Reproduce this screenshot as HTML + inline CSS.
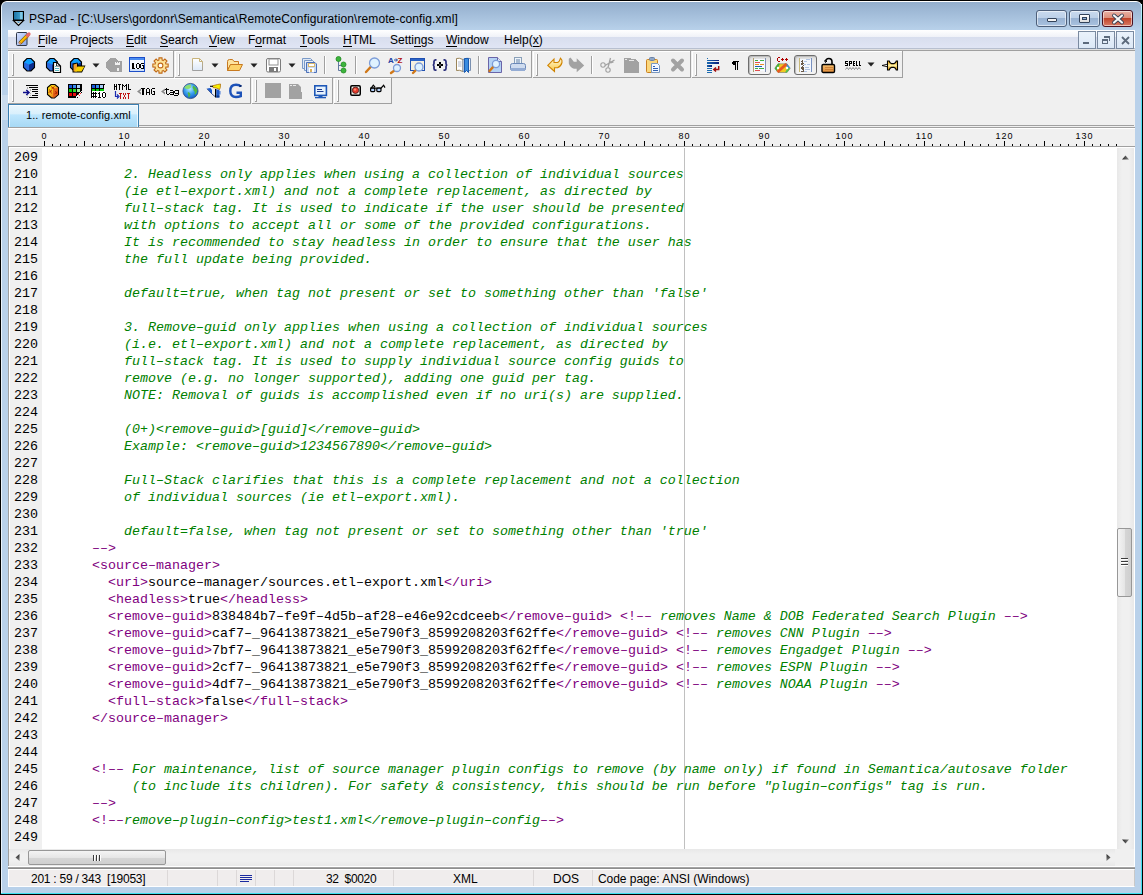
<!DOCTYPE html>
<html><head><meta charset="utf-8">
<style>
*{margin:0;padding:0;box-sizing:border-box}
html,body{width:1143px;height:895px;overflow:hidden;background:#000}
body{position:relative;font-family:"Liberation Sans",sans-serif;font-size:12px;color:#000}
.a{position:absolute}
svg.a{overflow:visible}
.cap{position:absolute;top:10px;height:17px;border:1px solid #4d5f7a;border-radius:3px;background:linear-gradient(#c9daee 0,#bcd0e8 46%,#98b2d2 50%,#a9c2e0 100%);box-shadow:inset 0 0 0 1px rgba(255,255,255,.55)}
.mi{position:absolute;top:33px;white-space:nowrap;line-height:14px}
.mi u{text-decoration:none;position:relative}
.mi u:after{content:"";position:absolute;left:0;right:0;top:13px;height:1px;background:#000}
.mdi{position:absolute;top:31px;width:18px;height:18px;border:1px solid #7a8aa0;background:linear-gradient(#eaf2fb,#dce8f6)}
.tk{position:absolute;width:1px;background:#000}
.rl{position:absolute;top:131px;width:40px;text-align:center;font-family:"Liberation Sans",sans-serif;font-size:9px;line-height:10px;color:#000;letter-spacing:1px;text-indent:1px}
.ln,.num{position:absolute;left:0;height:17px;white-space:pre;font-family:"Liberation Mono",monospace;font-size:13.333px;line-height:17px}
.num{left:4px}
.c{color:#008000;font-style:italic}
.t{color:#800080}
.x{color:#000}
.st{position:absolute;top:873px;white-space:nowrap;line-height:13px;font-size:12px}
.ssep{position:absolute;top:870px;width:1px;height:16px;background:#dcd8d8}
</style></head><body>
<!-- window frame -->
<div class="a" style="left:0;top:0;width:1143px;height:895px;background:#000"></div>
<div class="a" style="left:1px;top:1px;width:1141px;height:893px;background:#b9d1ea;border-radius:6px 6px 0 0;border-top:1px solid #fff;border-left:1px solid #eaf3fb"></div>
<div class="a" style="left:2px;top:2px;width:1139px;height:28px;background:linear-gradient(#93aecd,#b8d1ea);border-radius:5px 5px 0 0"></div>
<div class="a" style="left:1141px;top:4px;width:1px;height:890px;background:linear-gradient(#c8f2fb,#60e4f4 40px,#3ee0f0 200px)"></div>
<div class="a" style="left:1px;top:893px;width:1141px;height:1px;background:#3ee0f0"></div>
<div class="a" style="left:2px;top:95px;width:6px;height:25px;background:#cbdcee"></div>

<!-- title -->
<svg class="a" style="left:12px;top:10px" width="13" height="17" viewBox="0 0 13 17"><defs><linearGradient id="ti" x1="0" y1="0" x2="1" y2="0"><stop offset="0" stop-color="#1a6ea0"/><stop offset=".6" stop-color="#3a9ac8"/><stop offset=".75" stop-color="#9ad8ee"/><stop offset="1" stop-color="#2a86b8"/></linearGradient></defs><rect x="1.5" y="1.5" width="10" height="8.5" fill="url(#ti)" stroke="#000"/><path d="M1.5 10.5H11.5L6.5 15.5Z" fill="#f4f0ea" stroke="#000" stroke-width="1.2"/><path d="M4 11.5H9L6.5 13Z" fill="#2a86c0"/></svg>
<div class="a" id="ttext" style="left:29px;top:12px;letter-spacing:0.1px;white-space:nowrap;line-height:14px">PSPad - [C:\Users\gordonr\Semantica\RemoteConfiguration\remote-config.xml]</div>
<div class="cap" style="left:1036px;width:31px"><div class="a" style="left:10px;top:7px;width:10px;height:4px;border:1px solid #33435a;border-radius:1px;background:#f4f4f4"></div></div>
<div class="cap" style="left:1069px;width:31px"><div class="a" style="left:9px;top:3px;width:11px;height:9px;border:1px solid #33435a;border-radius:1px;background:linear-gradient(#fff,#ddd)"><div class="a" style="left:2px;top:2px;width:5px;height:3px;border:1px solid #33435a;background:#8fb0d8"></div></div></div>
<div class="cap" style="left:1102px;width:31px;border-color:#4a1020;background:linear-gradient(#eab1a4 0,#dc8f7c 46%,#c0442a 50%,#d97c66 100%)"><svg class="a" style="left:9px;top:3px" width="12" height="10" viewBox="0 0 12 10"><path d="M2 1.5L10 8.5M10 1.5L2 8.5" stroke="#333e52" stroke-width="3.8" stroke-linecap="round"/><path d="M2 1.5L10 8.5M10 1.5L2 8.5" stroke="#f6f6f6" stroke-width="2.2" stroke-linecap="round"/></svg></div>

<!-- menu -->
<div class="a" style="left:8px;top:30px;width:1127px;height:18px;background:linear-gradient(#ffffff 0,#f0f2f8 38%,#d8deee 40%,#e0e5f4 100%);border-right:1px solid #fff"></div>
<div class="a" style="left:8px;top:48px;width:1127px;height:1px;background:#b8c0d0"></div>
<div class="a" style="left:8px;top:49px;width:1127px;height:1px;background:#e0e0e0"></div>
<div class="a" style="left:8px;top:50px;width:1127px;height:1px;background:#a0a0a0"></div>
<svg class="a" style="left:15px;top:31px" width="17" height="17" viewBox="0 0 17 17"><defs><linearGradient id="mn" x1="0" y1="0" x2="1" y2="1"><stop offset="0" stop-color="#d8e4ff"/><stop offset="1" stop-color="#8aa4e8"/></linearGradient></defs><rect x="1.5" y="1.5" width="10.5" height="13" rx="1" fill="url(#mn)" stroke="#303848"/><path d="M5.5 11.5L12.5 4.5" stroke="#5a4010" stroke-width="3.8" stroke-linecap="round"/><path d="M5.5 11.5L12.5 4.5" stroke="#f8c000" stroke-width="2.6"/><path d="M6.5 11.5L12.5 5.5" stroke="#f09000" stroke-width="1"/><path d="M12.5 4.5L14 3" stroke="#e86a6a" stroke-width="3.2" stroke-linecap="round"/><path d="M4.3 12.8L5.5 11.5" stroke="#f0a070" stroke-width="2"/></svg>
<div class="mi" style="left:38px"><u>F</u>ile</div>
<div class="mi" style="left:70px">Pro<u>j</u>ects</div>
<div class="mi" style="left:126px"><u>E</u>dit</div>
<div class="mi" style="left:160px"><u>S</u>earch</div>
<div class="mi" style="left:209px"><u>V</u>iew</div>
<div class="mi" style="left:248px">F<u>o</u>rmat</div>
<div class="mi" style="left:300px"><u>T</u>ools</div>
<div class="mi" style="left:343px"><u>H</u>TML</div>
<div class="mi" style="left:390px">Setti<u>n</u>gs</div>
<div class="mi" style="left:446px"><u>W</u>indow</div>
<div class="mi" style="left:504px">Help(<u>x</u>)</div>
<div class="mdi" style="left:1078px"><div class="a" style="left:4px;top:10px;width:6px;height:2px;background:#5c6a7c"></div></div>
<div class="mdi" style="left:1097px"><div class="a" style="left:6px;top:4px;width:6px;height:5px;border:1px solid #5c6a7c;border-top-width:2px;border-left:none;border-bottom:none"></div><div class="a" style="left:4px;top:7px;width:6px;height:5px;border:1px solid #5c6a7c;border-top-width:2px"></div></div>
<div class="mdi" style="left:1116px"><svg class="a" style="left:4px;top:4px" width="9" height="9" viewBox="0 0 9 9"><path d="M1 1L8 8M8 1L1 8" stroke="#5c6a7c" stroke-width="1.8"/></svg></div>

<!-- toolbars -->
<div class="a" style="left:8px;top:51px;width:1127px;height:53px;background:#f0f0f0"></div>
<div class="a" style="left:8px;top:51px;width:165px;height:1px;background:#fff"></div>
<div class="a" style="left:8px;top:51px;width:1px;height:26px;background:#fff"></div>
<div class="a" style="left:173px;top:51px;width:1px;height:27px;background:#a0a0a0"></div>
<div class="a" style="left:8px;top:77px;width:166px;height:1px;background:#a0a0a0"></div>
<div class="a" style="left:175px;top:51px;width:356px;height:1px;background:#fff"></div>
<div class="a" style="left:175px;top:51px;width:1px;height:26px;background:#fff"></div>
<div class="a" style="left:531px;top:51px;width:1px;height:27px;background:#a0a0a0"></div>
<div class="a" style="left:175px;top:77px;width:357px;height:1px;background:#a0a0a0"></div>
<div class="a" style="left:533px;top:51px;width:157px;height:1px;background:#fff"></div>
<div class="a" style="left:533px;top:51px;width:1px;height:26px;background:#fff"></div>
<div class="a" style="left:690px;top:51px;width:1px;height:27px;background:#a0a0a0"></div>
<div class="a" style="left:533px;top:77px;width:158px;height:1px;background:#a0a0a0"></div>
<div class="a" style="left:692px;top:51px;width:210px;height:1px;background:#fff"></div>
<div class="a" style="left:692px;top:51px;width:1px;height:26px;background:#fff"></div>
<div class="a" style="left:902px;top:51px;width:1px;height:27px;background:#a0a0a0"></div>
<div class="a" style="left:692px;top:77px;width:211px;height:1px;background:#a0a0a0"></div>
<div class="a" style="left:8px;top:78px;width:242px;height:1px;background:#fff"></div>
<div class="a" style="left:8px;top:78px;width:1px;height:25px;background:#fff"></div>
<div class="a" style="left:250px;top:78px;width:1px;height:26px;background:#a0a0a0"></div>
<div class="a" style="left:8px;top:103px;width:243px;height:1px;background:#a0a0a0"></div>
<div class="a" style="left:252px;top:78px;width:80px;height:1px;background:#fff"></div>
<div class="a" style="left:252px;top:78px;width:1px;height:25px;background:#fff"></div>
<div class="a" style="left:332px;top:78px;width:1px;height:26px;background:#a0a0a0"></div>
<div class="a" style="left:252px;top:103px;width:81px;height:1px;background:#a0a0a0"></div>
<div class="a" style="left:334px;top:78px;width:57px;height:1px;background:#fff"></div>
<div class="a" style="left:334px;top:78px;width:1px;height:25px;background:#fff"></div>
<div class="a" style="left:391px;top:78px;width:1px;height:26px;background:#a0a0a0"></div>
<div class="a" style="left:334px;top:103px;width:58px;height:1px;background:#a0a0a0"></div>
<div class="a" style="left:13px;top:54px;width:1px;height:22px;background:#a0a0a0"></div>
<div class="a" style="left:12px;top:54px;width:1px;height:21px;background:#fff"></div>
<div class="a" style="left:12px;top:75px;width:1px;height:1px;background:#a0a0a0"></div>
<div class="a" style="left:179px;top:54px;width:1px;height:22px;background:#a0a0a0"></div>
<div class="a" style="left:178px;top:54px;width:1px;height:21px;background:#fff"></div>
<div class="a" style="left:178px;top:75px;width:1px;height:1px;background:#a0a0a0"></div>
<div class="a" style="left:537px;top:54px;width:1px;height:22px;background:#a0a0a0"></div>
<div class="a" style="left:536px;top:54px;width:1px;height:21px;background:#fff"></div>
<div class="a" style="left:536px;top:75px;width:1px;height:1px;background:#a0a0a0"></div>
<div class="a" style="left:696px;top:54px;width:1px;height:22px;background:#a0a0a0"></div>
<div class="a" style="left:695px;top:54px;width:1px;height:21px;background:#fff"></div>
<div class="a" style="left:695px;top:75px;width:1px;height:1px;background:#a0a0a0"></div>
<div class="a" style="left:13px;top:80px;width:1px;height:22px;background:#a0a0a0"></div>
<div class="a" style="left:12px;top:80px;width:1px;height:21px;background:#fff"></div>
<div class="a" style="left:12px;top:101px;width:1px;height:1px;background:#a0a0a0"></div>
<div class="a" style="left:256px;top:80px;width:1px;height:22px;background:#a0a0a0"></div>
<div class="a" style="left:255px;top:80px;width:1px;height:21px;background:#fff"></div>
<div class="a" style="left:255px;top:101px;width:1px;height:1px;background:#a0a0a0"></div>
<div class="a" style="left:338px;top:80px;width:1px;height:22px;background:#a0a0a0"></div>
<div class="a" style="left:337px;top:80px;width:1px;height:21px;background:#fff"></div>
<div class="a" style="left:337px;top:101px;width:1px;height:1px;background:#a0a0a0"></div>
<div class="a" style="left:324px;top:56px;width:1px;height:18px;background:#a0a0a0"></div>
<div class="a" style="left:325px;top:56px;width:1px;height:18px;background:#fff"></div>
<div class="a" style="left:355px;top:56px;width:1px;height:18px;background:#a0a0a0"></div>
<div class="a" style="left:356px;top:56px;width:1px;height:18px;background:#fff"></div>
<div class="a" style="left:478px;top:56px;width:1px;height:18px;background:#a0a0a0"></div>
<div class="a" style="left:479px;top:56px;width:1px;height:18px;background:#fff"></div>
<div class="a" style="left:591px;top:56px;width:1px;height:18px;background:#a0a0a0"></div>
<div class="a" style="left:592px;top:56px;width:1px;height:18px;background:#fff"></div>
<svg class="a" style="left:22px;top:57px" width="16" height="16" viewBox="0 0 16 16" ><g transform="translate(1,1)"><path d="M4 0.5H8L11.5 4V9.5L8 13H4L0.5 9.5V4Z" fill="#2a68dc"/><path d="M6 6.5V13H8L11.5 9.5V4Z" fill="#0a2c8c"/><path d="M4 0.5H8L11.5 4L6 6.5L0.5 4Z" fill="#10a0ff"/><path d="M4 0.5H8L11.5 4V9.5L8 13H4L0.5 9.5V4Z" fill="none" stroke="#000" stroke-width="1.1"/></g></svg>
<svg class="a" style="left:45px;top:57px" width="17" height="17" viewBox="0 0 17 17" ><g transform="translate(1,1)"><path d="M4 0.5H8L11.5 4V9.5L8 13H4L0.5 9.5V4Z" fill="#2a68dc"/><path d="M6 6.5V13H8L11.5 9.5V4Z" fill="#0a2c8c"/><path d="M4 0.5H8L11.5 4L6 6.5L0.5 4Z" fill="#10a0ff"/><path d="M4 0.5H8L11.5 4V9.5L8 13H4L0.5 9.5V4Z" fill="none" stroke="#000" stroke-width="1.1"/></g><path d="M8.5 5.5H12L15.5 9V15.5H8.5Z" fill="#fff" stroke="#000" stroke-width="1.2"/><path d="M11.5 5.5V9H15" fill="none" stroke="#000" stroke-width=".8"/><path d="M10 9.5h1.5M10 11.5h4M10 13.5h4" stroke="#5ab8c0"/></svg>
<svg class="a" style="left:69px;top:57px" width="17" height="17" viewBox="0 0 17 17" ><g transform="translate(1,1)"><path d="M4 0.5H8L11.5 4V9.5L8 13H4L0.5 9.5V4Z" fill="#2a68dc"/><path d="M6 6.5V13H8L11.5 9.5V4Z" fill="#0a2c8c"/><path d="M4 0.5H8L11.5 4L6 6.5L0.5 4Z" fill="#10a0ff"/><path d="M4 0.5H8L11.5 4V9.5L8 13H4L0.5 9.5V4Z" fill="none" stroke="#000" stroke-width="1.1"/></g><path d="M3.5 6.5L8.5 5.5L9.5 8.5H16.5L13 15.5H3.5Z" fill="#000"/><path d="M4.5 7.5L8 6.5V14.5H4.5Z" fill="#f0a030"/><path d="M5.5 14.5L8.5 9.5H15.5L12.5 14.5Z" fill="#f8d000"/></svg>
<svg class="a" style="left:92px;top:63px" width="8" height="5" viewBox="0 0 8 5" ><path d="M0.5 0.5H7.5L4 4.5Z" fill="#222"/></svg>
<svg class="a" style="left:106px;top:58px" width="16" height="14" viewBox="0 0 16 14" shape-rendering="crispEdges"><path d="M4 0H9L12 3H16V14H4L0 10V4Z" fill="#a2a2a2"/><rect x="9" y="4" width="5" height="3" fill="#f0f0f0"/><rect x="10" y="4" width="1" height="1" fill="#a2a2a2"/><rect x="12" y="4" width="1" height="1" fill="#a2a2a2"/><rect x="11" y="10" width="2" height="3" fill="#f0f0f0"/><rect x="14" y="2" width="1" height="1" fill="#f0f0f0"/></svg>
<svg class="a" style="left:129px;top:57px" width="16" height="15" viewBox="0 0 16 15" ><rect x="0.5" y="0.5" width="15" height="14" fill="#f2f8ff" stroke="#1d4fc8"/><rect x="1" y="1" width="14" height="2" fill="#4a8cf0"/><rect x="1" y="12" width="14" height="2" fill="#cfe0fa"/><g fill="#000" shape-rendering="crispEdges"><rect x="3" y="6" width="1" height="1"/><rect x="4" y="6" width="1" height="1"/><rect x="3" y="7" width="1" height="1"/><rect x="4" y="7" width="1" height="1"/><rect x="3" y="8" width="1" height="1"/><rect x="4" y="8" width="1" height="1"/><rect x="3" y="9" width="1" height="1"/><rect x="4" y="9" width="1" height="1"/><rect x="3" y="10" width="1" height="1"/><rect x="4" y="10" width="1" height="1"/><rect x="3" y="11" width="1" height="1"/><rect x="4" y="11" width="1" height="1"/><rect x="5" y="11" width="1" height="1"/><rect x="8" y="6" width="1" height="1"/><rect x="9" y="6" width="1" height="1"/><rect x="7" y="7" width="1" height="1"/><rect x="10" y="7" width="1" height="1"/><rect x="7" y="8" width="1" height="1"/><rect x="10" y="8" width="1" height="1"/><rect x="7" y="9" width="1" height="1"/><rect x="10" y="9" width="1" height="1"/><rect x="7" y="10" width="1" height="1"/><rect x="10" y="10" width="1" height="1"/><rect x="8" y="11" width="1" height="1"/><rect x="9" y="11" width="1" height="1"/><rect x="12" y="6" width="1" height="1"/><rect x="13" y="6" width="1" height="1"/><rect x="14" y="6" width="1" height="1"/><rect x="11" y="7" width="1" height="1"/><rect x="11" y="8" width="1" height="1"/><rect x="13" y="8" width="1" height="1"/><rect x="14" y="8" width="1" height="1"/><rect x="11" y="9" width="1" height="1"/><rect x="14" y="9" width="1" height="1"/><rect x="11" y="10" width="1" height="1"/><rect x="14" y="10" width="1" height="1"/><rect x="12" y="11" width="1" height="1"/><rect x="13" y="11" width="1" height="1"/><rect x="14" y="11" width="1" height="1"/></g></svg>
<svg class="a" style="left:152px;top:57px" width="17" height="17" viewBox="0 0 17 17" ><path d="M6.36 3.33 L6.86 3.14 L7.01 0.84 L9.99 0.84 L10.14 3.14 L10.64 3.33 L11.13 3.56 L12.86 2.03 L14.97 4.14 L13.44 5.87 L13.67 6.36 L13.86 6.86 L16.16 7.01 L16.16 9.99 L13.86 10.14 L13.67 10.64 L13.44 11.13 L14.97 12.86 L12.86 14.97 L11.13 13.44 L10.64 13.67 L10.14 13.86 L9.99 16.16 L7.01 16.16 L6.86 13.86 L6.36 13.67 L5.87 13.44 L4.14 14.97 L2.03 12.86 L3.56 11.13 L3.33 10.64 L3.14 10.14 L0.84 9.99 L0.84 7.01 L3.14 6.86 L3.33 6.36 L3.56 5.87 L2.03 4.14 L4.14 2.03 L5.87 3.56Z" fill="#fde39a" stroke="#c06a18" stroke-width="1.1" stroke-linejoin="miter"/><circle cx="8.5" cy="8.5" r="2.4" fill="#fff" stroke="#c06a18" stroke-width="1.1"/></svg>
<svg class="a" style="left:191px;top:57px" width="13" height="15" viewBox="0 0 13 15" ><defs><linearGradient id="nd" x1="0" y1="0" x2="0" y2="1"><stop offset="0" stop-color="#c9b47a"/><stop offset="1" stop-color="#a0a0a0"/></linearGradient><linearGradient id="ndf" x1="0" y1="0" x2="0" y2="1"><stop offset="0" stop-color="#fff"/><stop offset="1" stop-color="#dde9f8"/></linearGradient></defs><path d="M1.5 1.5H8.5L11.5 4.5V13.5H1.5Z" fill="url(#ndf)" stroke="url(#nd)"/><path d="M8.5 1.5V4.5H11.5" fill="none" stroke="#c9b47a"/></svg>
<svg class="a" style="left:211px;top:63px" width="8" height="5" viewBox="0 0 8 5" ><path d="M0.5 0.5H7.5L4 4.5Z" fill="#222"/></svg>
<svg class="a" style="left:227px;top:59px" width="16" height="13" viewBox="0 0 16 13" ><path d="M0.5 2.5Q0.5 0.5 2.5 0.5H5.5L7 2.5H11.5V5.5H3.5L0.5 11.5Z" fill="#fde4a0" stroke="#c87a20"/><path d="M0.5 11.5L3.5 5.5H15.5L12.5 11.5Z" fill="#fcd36a" stroke="#c87a20"/></svg>
<svg class="a" style="left:250px;top:63px" width="8" height="5" viewBox="0 0 8 5" ><path d="M0.5 0.5H7.5L4 4.5Z" fill="#222"/></svg>
<svg class="a" style="left:266px;top:58px" width="15" height="15" viewBox="0 0 15 15" ><rect x="0.5" y="0.5" width="14" height="13.5" rx="1.5" fill="#fff" stroke="#7c7c7c"/><rect x="3" y="1" width="9" height="6" fill="#fff" stroke="#909090"/><rect x="3" y="9" width="9" height="5" fill="#7a7a7a"/><rect x="8" y="10" width="2" height="3" fill="#fff"/></svg>
<svg class="a" style="left:288px;top:63px" width="8" height="5" viewBox="0 0 8 5" ><path d="M0.5 0.5H7.5L4 4.5Z" fill="#222"/></svg>
<svg class="a" style="left:301px;top:57px" width="17" height="17" viewBox="0 0 17 17" ><path d="M1.5 1.5H9.5L11.5 3.5V11.5H1.5Z" fill="#dfe8f5" stroke="#7a9ac8"/><path d="M3.5 3.5H11.5L13.5 5.5V13.5H3.5Z" fill="#e6eef8" stroke="#7a9ac8"/><path d="M5.5 5.5H14L15.5 7V15.5H5.5Z" fill="#c9daf2" stroke="#4d70b8"/><rect x="7.5" y="6.5" width="6" height="3" fill="#fff" stroke="#d8b870"/><rect x="8" y="11" width="5" height="4.5" fill="#fff"/><rect x="9" y="12" width="2" height="3" fill="#d8b060"/></svg>
<svg class="a" style="left:335px;top:56px" width="12" height="18" viewBox="0 0 12 18" ><path d="M3.5 4V14.5M3.5 9.5H8M3.5 14.5H8" stroke="#6078a0"/><circle cx="3.5" cy="3" r="2.5" fill="#3cb43c" stroke="#228a22" stroke-width=".8"/><circle cx="8.5" cy="8.5" r="2.5" fill="#3cb43c" stroke="#228a22" stroke-width=".8"/><circle cx="8.5" cy="14.5" r="2.5" fill="#3cb43c" stroke="#228a22" stroke-width=".8"/></svg>
<svg class="a" style="left:364px;top:57px" width="17" height="17" viewBox="0 0 17 17" ><path d="M2 15L7.5 9.0" stroke="#d07818" stroke-width="2.4" stroke-linecap="round"/><circle cx="10.5" cy="6" r="5" fill="#dff2ff" stroke="#7c9cd8" stroke-width="1.3"/></svg>
<svg class="a" style="left:388px;top:56px" width="16" height="18" viewBox="0 0 16 18" ><text x="0" y="7" font-family="Liberation Sans" font-weight="bold" font-size="8" fill="#2040a0">A</text><path d="M6 4H9M8 2.5L9.5 4L8 5.5" stroke="#2040a0" fill="none"/><text x="9.5" y="7" font-family="Liberation Sans" font-weight="bold" font-size="8" fill="#b01010">Z</text><path d="M3 17L6.9 14.1" stroke="#d07818" stroke-width="2.4" stroke-linecap="round"/><circle cx="9" cy="12" r="3.5" fill="#dff2ff" stroke="#7c9cd8" stroke-width="1.3"/></svg>
<svg class="a" style="left:410px;top:58px" width="16" height="16" viewBox="0 0 16 16" ><rect x="0.5" y="0.5" width="14" height="12" fill="#f6f0e0" stroke="#2050b0"/><rect x="1" y="1" width="13" height="2" fill="#2c64c8"/><path d="M3 15L6.6 11.4" stroke="#d07818" stroke-width="2.4" stroke-linecap="round"/><circle cx="9" cy="9" r="4" fill="#dff2ff" stroke="#7c9cd8" stroke-width="1.3"/></svg>
<svg class="a" style="left:432px;top:59px" width="17" height="13" viewBox="0 0 17 13" ><path d="M4.5 0.8H3.5Q2 0.8 2 2.5V4.5Q2 5.8 0.8 6Q2 6.2 2 7.5V9.5Q2 11.2 3.5 11.2H4.5M11.5 0.8H12.5Q14 0.8 14 2.5V4.5Q14 5.8 15.2 6Q14 6.2 14 7.5V9.5Q14 11.2 12.5 11.2H11.5" stroke="#262a78" stroke-width="1.7" fill="none"/><rect x="7" y="3" width="2" height="6" fill="#000"/><rect x="5" y="5" width="6" height="2" fill="#000"/><rect x="7" y="5" width="2" height="2" fill="#fff" opacity=".3"/></svg>
<svg class="a" style="left:455px;top:57px" width="17" height="17" viewBox="0 0 17 17" ><path d="M1.5 1.5Q4 0.5 8 2.5V14.5Q4 12.5 1.5 13.5Z" fill="#fff" stroke="#9a8458"/><path d="M8 2.5Q12 0.5 15.5 1.5V13.5Q12 12.5 8 14.5Z" fill="#eef2f8" stroke="#7a90b0"/><path d="M3 5h3.5M3 7h3.5M3 9h3.5" stroke="#b0b8c8"/><path d="M9.5 1.5H13.5V15.5L11.5 13.5L9.5 15.5Z" fill="#3a8ce0" stroke="#1a5ab0"/></svg>
<svg class="a" style="left:488px;top:57px" width="15" height="16" viewBox="0 0 15 16" ><path d="M0.5 0.5H9.5L13.5 4.5V15.5H0.5Z" fill="#b4d2f4" stroke="#6a64a8"/><path d="M9.5 0.5V4.5H13.5" fill="#dfeefc" stroke="#6a64a8"/><path d="M1.5 14L5.84 9.16" stroke="#d07818" stroke-width="2.4" stroke-linecap="round"/><circle cx="8" cy="7" r="3.6" fill="#dff2ff" stroke="#7c9cd8" stroke-width="1.3"/></svg>
<svg class="a" style="left:510px;top:57px" width="16" height="16" viewBox="0 0 16 16" ><rect x="4.5" y="0.5" width="7" height="6" fill="#eef4fa" stroke="#8aa0b8"/><path d="M6 3h4M6 5h4" stroke="#6080a8"/><rect x="0.5" y="6.5" width="15" height="7" rx="2" fill="#cfdcef" stroke="#6a88b8"/><rect x="1" y="11" width="14" height="3" fill="#94acd4"/></svg>
<svg class="a" style="left:547px;top:57px" width="16" height="16" viewBox="0 0 16 16" ><defs><linearGradient id="ud" x1="0" y1="0" x2="0" y2="1"><stop offset="0" stop-color="#fffbe8"/><stop offset=".5" stop-color="#fde08a"/><stop offset="1" stop-color="#f8c850"/></linearGradient></defs><path d="M0.8 8.4L7 2.2V5.5H10.5Q12.5 5 13.5 1.2Q15.5 3 15 5.5Q14 9.5 10.5 10.8H7.5V14.5Z" fill="url(#ud)" stroke="#d08400" stroke-width="1.1" stroke-linejoin="miter"/></svg>
<svg class="a" style="left:568px;top:57px" width="17" height="16" viewBox="0 0 17 16" ><path d="M16.2 8.4L8.7 1.3V4.8H5.8L2.5 0.5L0.8 1.8V6.5Q2 10.5 6 11.8H8.7V15.2Z" fill="#a2a2a2"/></svg>
<svg class="a" style="left:600px;top:57px" width="16" height="16" viewBox="0 0 16 16" ><circle cx="3" cy="8" r="2.2" fill="none" stroke="#a2a2a2" stroke-width="1.1"/><circle cx="8" cy="13" r="2.2" fill="none" stroke="#a2a2a2" stroke-width="1.1"/><path d="M5 8.5L14.5 3M8 10.5L10.5 1M10.5 6l3-1M9.5 3.5l1 2" stroke="#a2a2a2" stroke-width="1.3"/></svg>
<svg class="a" style="left:624px;top:57px" width="16" height="16" viewBox="0 0 16 16" shape-rendering="crispEdges"><path d="M0 1H6L7 2H11L15 6V16H0Z" fill="#a2a2a2"/><rect x="1" y="2" width="2" height="1" fill="#e8e8e8"/><rect x="5" y="3" width="5" height="1" fill="#e8e8e8"/></svg>
<svg class="a" style="left:646px;top:57px" width="15" height="16" viewBox="0 0 15 16" ><rect x="0.5" y="2.5" width="11" height="13" rx="1" fill="#fbd77c" stroke="#c88020"/><rect x="3.5" y="0.5" width="5" height="3" rx="1" fill="#8ea6c6" stroke="#6a82a6"/><path d="M5.5 6.5H11.5L13.5 8.5V15.5H5.5Z" fill="#f4f8ff" stroke="#7a98c0"/><path d="M7 9.5h2M7 11.5h5M7 13.5h5" stroke="#3060b0"/></svg>
<svg class="a" style="left:670px;top:58px" width="15" height="14" viewBox="0 0 15 14" ><path d="M3 2.5L12 11.5M12 2.5L3 11.5" stroke="#a2a2a2" stroke-width="4" stroke-linecap="round"/></svg>
<svg class="a" style="left:707px;top:58px" width="14" height="16" viewBox="0 0 14 16" ><defs><linearGradient id="ww" x1="0" y1="0" x2="1" y2="0"><stop offset="0" stop-color="#1a6ab0"/><stop offset="1" stop-color="#0a1a78"/></linearGradient></defs><g shape-rendering="crispEdges"><rect x="0" y="0" width="1" height="1" fill="#1a6ab0"/><rect x="0" y="2" width="12" height="1" fill="url(#ww)"/><rect x="0" y="4" width="12" height="2" fill="url(#ww)"/><rect x="0" y="7" width="5" height="2" fill="url(#ww)"/><rect x="0" y="10" width="5" height="1" fill="#1a6ab0"/><rect x="0" y="12" width="5" height="1" fill="#1a6ab0"/><rect x="0" y="14" width="5" height="1" fill="#1a6ab0"/></g><path d="M11.7 8V11.5H7.5M9 9.5L6.8 11.5L9 13.5" stroke="#a00c0c" stroke-width="1.5" fill="none"/></svg>
<svg class="a" style="left:732px;top:61px" width="8" height="10" viewBox="0 0 8 10" ><g fill="#000" shape-rendering="crispEdges"><rect x="1" y="0" width="1" height="1"/><rect x="2" y="0" width="1" height="1"/><rect x="3" y="0" width="1" height="1"/><rect x="4" y="0" width="1" height="1"/><rect x="5" y="0" width="1" height="1"/><rect x="6" y="0" width="1" height="1"/><rect x="0" y="1" width="1" height="1"/><rect x="1" y="1" width="1" height="1"/><rect x="2" y="1" width="1" height="1"/><rect x="3" y="1" width="1" height="1"/><rect x="5" y="1" width="1" height="1"/><rect x="0" y="2" width="1" height="1"/><rect x="1" y="2" width="1" height="1"/><rect x="2" y="2" width="1" height="1"/><rect x="3" y="2" width="1" height="1"/><rect x="5" y="2" width="1" height="1"/><rect x="1" y="3" width="1" height="1"/><rect x="2" y="3" width="1" height="1"/><rect x="3" y="3" width="1" height="1"/><rect x="5" y="3" width="1" height="1"/><rect x="3" y="4" width="1" height="1"/><rect x="5" y="4" width="1" height="1"/><rect x="3" y="5" width="1" height="1"/><rect x="5" y="5" width="1" height="1"/><rect x="3" y="6" width="1" height="1"/><rect x="5" y="6" width="1" height="1"/><rect x="3" y="7" width="1" height="1"/><rect x="5" y="7" width="1" height="1"/><rect x="3" y="8" width="1" height="1"/><rect x="5" y="8" width="1" height="1"/></g></svg>
<div class="a" style="left:748px;top:55px;width:23px;height:20px;border:1px solid #6e6e6e;border-radius:3px;background:linear-gradient(#dcdcdc,#ececec 40%,#f4f4f4);box-shadow:inset 1px 1px 1px #b8b8b8"></div>
<svg class="a" style="left:753px;top:58px" width="14" height="14" viewBox="0 0 14 14" ><rect x="0" y="0" width="1" height="14" fill="#b0a070"/><rect x="12" y="0" width="1" height="14" fill="#8090b0"/><rect x="1" y="1" width="11" height="12" fill="#f6f9ff"/><path d="M2 2.5h3M7 2.5h4" stroke="#40b040"/><path d="M2 4.5h5" stroke="#e05050"/><path d="M2 6.5h4M7 6.5h4" stroke="#f09020"/><path d="M2 8.5h7" stroke="#2060b0"/><path d="M2 10.5h3M6 10.5h5" stroke="#40b040"/><path d="M2 12.5h5" stroke="#e05050"/></svg>
<svg class="a" style="left:774px;top:57px" width="17" height="17" viewBox="0 0 17 17" ><g fill="#b00000" shape-rendering="crispEdges"><rect x="4" y="0" width="1" height="1"/><rect x="5" y="0" width="1" height="1"/><rect x="3" y="1" width="1" height="1"/><rect x="3" y="2" width="1" height="1"/><rect x="3" y="3" width="1" height="1"/><rect x="4" y="4" width="1" height="1"/><rect x="5" y="4" width="1" height="1"/></g><g fill="#b00000" shape-rendering="crispEdges"><rect x="8" y="1" width="1" height="1"/><rect x="7" y="2" width="1" height="1"/><rect x="8" y="2" width="1" height="1"/><rect x="9" y="2" width="1" height="1"/><rect x="8" y="3" width="1" height="1"/></g><g fill="#b00000" shape-rendering="crispEdges"><rect x="12" y="1" width="1" height="1"/><rect x="11" y="2" width="1" height="1"/><rect x="12" y="2" width="1" height="1"/><rect x="13" y="2" width="1" height="1"/><rect x="12" y="3" width="1" height="1"/></g><path d="M0.8 11.2L4 6.8H13L16.2 11.2L13 15.5H4Z" fill="#f0c820" stroke="#707070" stroke-width=".6"/><path d="M0.8 11.2L4 6.8H6L2.5 14Z" fill="#40b040"/><path d="M11 6.8H13L16.2 11.2H13.5Z" fill="#3090e0"/><path d="M13.5 11.2H16.2L13 15.5H11Z" fill="#50c050"/><path d="M3.5 15L12.5 7" stroke="#e85a20" stroke-width="3"/><circle cx="4" cy="11" r="1.2" fill="#fff"/><circle cx="13" cy="11" r="1.2" fill="#fff"/></svg>
<div class="a" style="left:794px;top:55px;width:23px;height:20px;border:1px solid #6e6e6e;border-radius:3px;background:linear-gradient(#dcdcdc,#ececec 40%,#f4f4f4);box-shadow:inset 1px 1px 1px #b8b8b8"></div>
<svg class="a" style="left:799px;top:58px" width="14" height="14" viewBox="0 0 14 14" ><rect x="0" y="0" width="1" height="14" fill="#c8b878"/><rect x="12" y="0" width="1" height="14" fill="#7890c0"/><rect x="1" y="1" width="11" height="12" fill="#f4f8fe"/><g fill="#6a5a4a" shape-rendering="crispEdges"><rect x="3" y="2" width="1" height="1"/><rect x="2" y="3" width="1" height="1"/><rect x="3" y="3" width="1" height="1"/><rect x="3" y="4" width="1" height="1"/><rect x="2" y="5" width="1" height="1"/><rect x="3" y="5" width="1" height="1"/><rect x="4" y="5" width="1" height="1"/></g><g fill="#6a5a4a" shape-rendering="crispEdges"><rect x="2" y="6" width="1" height="1"/><rect x="3" y="6" width="1" height="1"/><rect x="4" y="7" width="1" height="1"/><rect x="3" y="8" width="1" height="1"/><rect x="2" y="9" width="1" height="1"/><rect x="3" y="9" width="1" height="1"/><rect x="4" y="9" width="1" height="1"/></g><g fill="#6a5a4a" shape-rendering="crispEdges"><rect x="2" y="10" width="1" height="1"/><rect x="3" y="10" width="1" height="1"/><rect x="4" y="10" width="1" height="1"/><rect x="3" y="11" width="1" height="1"/><rect x="4" y="11" width="1" height="1"/><rect x="4" y="12" width="1" height="1"/><rect x="2" y="13" width="1" height="1"/><rect x="3" y="13" width="1" height="1"/><rect x="4" y="13" width="1" height="1"/></g><g shape-rendering="crispEdges" fill="#b0c4e4"><rect x="7" y="1" width="4" height="1"/><rect x="5" y="3" width="3" height="1"/><rect x="5" y="6" width="2" height="1"/><rect x="8" y="6" width="3" height="1"/><rect x="6" y="9" width="4" height="1"/><rect x="6" y="11" width="5" height="1"/><rect x="5" y="13" width="3" height="1"/></g></svg>
<svg class="a" style="left:821px;top:57px" width="15" height="17" viewBox="0 0 15 17" ><defs><linearGradient id="lk" x1="0" y1="0" x2="0" y2="1"><stop offset="0" stop-color="#f4c070"/><stop offset="1" stop-color="#e08a38"/></linearGradient></defs><path d="M11 8V5Q11 1.5 7.8 1.5Q5 1.5 4.5 4.5" fill="none" stroke="#000" stroke-width="1.6"/><path d="M3.5 3.5L4.5 5.5L6 4" fill="none" stroke="#000" stroke-width="1"/><rect x="1" y="7.5" width="12.5" height="8" rx="1.3" fill="url(#lk)" stroke="#000" stroke-width="1.4"/><path d="M4 10.5h8M4 12.5h8" stroke="#c87830" stroke-width=".8"/></svg>
<svg class="a" style="left:845px;top:60px" width="17" height="11" viewBox="0 0 17 11" ><g fill="#000" shape-rendering="crispEdges"><rect x="0" y="1" width="1" height="1"/><rect x="1" y="1" width="1" height="1"/><rect x="2" y="1" width="1" height="1"/><rect x="0" y="2" width="1" height="1"/><rect x="0" y="3" width="1" height="1"/><rect x="1" y="3" width="1" height="1"/><rect x="2" y="3" width="1" height="1"/><rect x="2" y="4" width="1" height="1"/><rect x="0" y="5" width="1" height="1"/><rect x="1" y="5" width="1" height="1"/><rect x="2" y="5" width="1" height="1"/></g><g fill="#000" shape-rendering="crispEdges"><rect x="4" y="1" width="1" height="1"/><rect x="5" y="1" width="1" height="1"/><rect x="6" y="1" width="1" height="1"/><rect x="4" y="2" width="1" height="1"/><rect x="6" y="2" width="1" height="1"/><rect x="4" y="3" width="1" height="1"/><rect x="5" y="3" width="1" height="1"/><rect x="6" y="3" width="1" height="1"/><rect x="4" y="4" width="1" height="1"/><rect x="4" y="5" width="1" height="1"/></g><g fill="#000" shape-rendering="crispEdges"><rect x="8" y="1" width="1" height="1"/><rect x="9" y="1" width="1" height="1"/><rect x="8" y="2" width="1" height="1"/><rect x="8" y="3" width="1" height="1"/><rect x="9" y="3" width="1" height="1"/><rect x="8" y="4" width="1" height="1"/><rect x="8" y="5" width="1" height="1"/><rect x="9" y="5" width="1" height="1"/></g><g fill="#000" shape-rendering="crispEdges"><rect x="11" y="1" width="1" height="1"/><rect x="11" y="2" width="1" height="1"/><rect x="11" y="3" width="1" height="1"/><rect x="11" y="4" width="1" height="1"/><rect x="11" y="5" width="1" height="1"/><rect x="12" y="5" width="1" height="1"/></g><g fill="#000" shape-rendering="crispEdges"><rect x="14" y="1" width="1" height="1"/><rect x="14" y="2" width="1" height="1"/><rect x="14" y="3" width="1" height="1"/><rect x="14" y="4" width="1" height="1"/><rect x="14" y="5" width="1" height="1"/><rect x="15" y="5" width="1" height="1"/></g><path d="M0.5 9.5l1.5-2 1.5 2 1.5-2 1.5 2 1.5-2 1.5 2 1.5-2 1.5 2 1.5-2 1.5 2" stroke="#707070" fill="none" stroke-width=".8"/></svg>
<svg class="a" style="left:867px;top:62px" width="8" height="5" viewBox="0 0 8 5" ><path d="M0.5 0.5H7.5L4 4.5Z" fill="#222"/></svg>
<svg class="a" style="left:881px;top:60px" width="17" height="11" viewBox="0 0 17 11" ><defs><linearGradient id="pn" x1="0" y1="0" x2="0" y2="1"><stop offset="0" stop-color="#f0a000"/><stop offset=".5" stop-color="#fff0a0"/><stop offset="1" stop-color="#e09000"/></linearGradient></defs><path d="M1 5.5L6.5 4.2V6.8Z" fill="#fff" stroke="#000" stroke-width=".9"/><path d="M6.5 1H8.2Q8.8 3.3 10.5 3.6H13Q14.7 3.3 15.3 1H16.5V10H15.3Q14.7 7.7 13 7.4H10.5Q8.8 7.7 8.2 10H6.5Z" fill="url(#pn)" stroke="#000" stroke-width="1.1"/></svg>
<svg class="a" style="left:22px;top:84px" width="17" height="15" viewBox="0 0 17 15" ><g shape-rendering="crispEdges"><rect x="4" y="1" width="12" height="1" fill="#000"/><rect x="7" y="3" width="9" height="1" fill="#000"/><rect x="10" y="5" width="6" height="1" fill="#000"/><rect x="10" y="7" width="6" height="1" fill="#000"/><rect x="13" y="9" width="3" height="1" fill="#000"/><rect x="10" y="11" width="6" height="1" fill="#000"/><rect x="7" y="13" width="9" height="1" fill="#000"/><rect x="5" y="3" width="1" height="2" fill="#a8a8a8"/><rect x="8" y="5" width="1" height="2" fill="#a8a8a8"/><rect x="8" y="9" width="1" height="1" fill="#b8b8b8"/><rect x="8" y="11" width="1" height="1" fill="#b8b8b8"/><rect x="5" y="11" width="1" height="1" fill="#b8b8b8"/><rect x="5" y="13" width="1" height="1" fill="#b8b8b8"/></g><path d="M1 8.5H6.5M4.3 6L7 8.5L4.3 11" stroke="#10108a" stroke-width="1.5" fill="none"/></svg>
<svg class="a" style="left:46px;top:83px" width="14" height="16" viewBox="0 0 14 16" ><defs><linearGradient id="bx" x1="0" y1="0" x2="1" y2="1"><stop offset="0" stop-color="#fff000"/><stop offset=".5" stop-color="#f8b020"/><stop offset="1" stop-color="#d84010"/></linearGradient></defs><path d="M5 1.5H9L12.5 4.5V11.5L8.5 15H5.5L1.5 11.5V4.5Z" fill="url(#bx)" stroke="#000" stroke-width="1.1"/><path d="M7 6L12 4.5V11.5L8.5 14.5H7Z" fill="#e05818" opacity=".8"/><path d="M5 3.5L8.5 6M8.5 3.5L5.5 6M3.5 6.5L5.5 10.5M2.5 9.5L6 7.5M9.5 8L11 11M8.5 11L11.5 9" stroke="#b02000" stroke-width=".9"/></svg>
<svg class="a" style="left:68px;top:84px" width="15" height="15" viewBox="0 0 15 15" shape-rendering="crispEdges"><path d="M0 0H14V6L12 8L10 10L8 12L6 14H0Z" fill="#000"/><rect x="1" y="1" width="3" height="3" fill="#1a58d8"/><rect x="5" y="1" width="3" height="3" fill="#3a8cf0"/><rect x="9" y="1" width="3" height="3" fill="#a8ccf8"/><rect x="1" y="5" width="3" height="3" fill="#00d000"/><rect x="5" y="5" width="3" height="3" fill="#30e030"/><rect x="9" y="5" width="3" height="3" fill="#a8f0a0"/><rect x="1" y="9" width="3" height="3" fill="#e00000"/><rect x="5" y="9" width="3" height="3" fill="#e81010"/><rect x="10" y="10" width="1" height="1" fill="#f03030"/><rect x="12" y="9" width="1" height="1" fill="#f03030"/><rect x="11" y="11" width="1" height="1" fill="#f03030"/><rect x="13" y="5" width="1" height="1" fill="#000"/><rect x="13" y="8" width="1" height="1" fill="#000"/><rect x="7" y="13" width="1" height="1" fill="#000"/><rect x="9" y="13" width="1" height="1" fill="#000"/></svg>
<svg class="a" style="left:91px;top:84px" width="15" height="15" viewBox="0 0 15 15" ><rect x="0" y="0" width="14" height="1" fill="#000"/><rect x="0" y="0" width="1" height="14" fill="#000"/><rect x="1" y="1" width="12" height="4" fill="#000"/><rect x="1" y="5" width="12" height="2" fill="#00d000"/><rect x="4" y="5" width="1" height="2" fill="#000"/><rect x="8" y="5" width="1" height="2" fill="#000"/><rect x="1" y="1" width="3" height="3" fill="#1a58d8"/><rect x="5" y="1" width="3" height="3" fill="#3a8cf0"/><rect x="9" y="1" width="3" height="3" fill="#a8ccf8"/><rect x="1" y="7" width="13" height="7" fill="#fff"/><rect x="0" y="7" width="1" height="7" fill="#000"/><g fill="#000" shape-rendering="crispEdges"><rect x="2" y="8" width="1" height="1"/><rect x="4" y="8" width="1" height="1"/><rect x="1" y="9" width="1" height="1"/><rect x="2" y="9" width="1" height="1"/><rect x="3" y="9" width="1" height="1"/><rect x="4" y="9" width="1" height="1"/><rect x="5" y="9" width="1" height="1"/><rect x="2" y="10" width="1" height="1"/><rect x="4" y="10" width="1" height="1"/><rect x="2" y="11" width="1" height="1"/><rect x="4" y="11" width="1" height="1"/><rect x="1" y="12" width="1" height="1"/><rect x="2" y="12" width="1" height="1"/><rect x="3" y="12" width="1" height="1"/><rect x="4" y="12" width="1" height="1"/><rect x="5" y="12" width="1" height="1"/><rect x="2" y="13" width="1" height="1"/><rect x="4" y="13" width="1" height="1"/></g><g fill="#000" shape-rendering="crispEdges"><rect x="8" y="8" width="1" height="1"/><rect x="7" y="9" width="1" height="1"/><rect x="8" y="9" width="1" height="1"/><rect x="8" y="10" width="1" height="1"/><rect x="8" y="11" width="1" height="1"/><rect x="8" y="12" width="1" height="1"/><rect x="7" y="13" width="1" height="1"/><rect x="8" y="13" width="1" height="1"/><rect x="9" y="13" width="1" height="1"/></g><g fill="#000" shape-rendering="crispEdges"><rect x="12" y="8" width="1" height="1"/><rect x="13" y="8" width="1" height="1"/><rect x="11" y="9" width="1" height="1"/><rect x="14" y="9" width="1" height="1"/><rect x="11" y="10" width="1" height="1"/><rect x="14" y="10" width="1" height="1"/><rect x="11" y="11" width="1" height="1"/><rect x="14" y="11" width="1" height="1"/><rect x="11" y="12" width="1" height="1"/><rect x="14" y="12" width="1" height="1"/><rect x="12" y="13" width="1" height="1"/><rect x="13" y="13" width="1" height="1"/></g></svg>
<svg class="a" style="left:113px;top:83px" width="18" height="17" viewBox="0 0 18 17" ><g fill="#000" shape-rendering="crispEdges"><rect x="1" y="1" width="1" height="1"/><rect x="3" y="1" width="1" height="1"/><rect x="1" y="2" width="1" height="1"/><rect x="3" y="2" width="1" height="1"/><rect x="1" y="3" width="1" height="1"/><rect x="2" y="3" width="1" height="1"/><rect x="3" y="3" width="1" height="1"/><rect x="1" y="4" width="1" height="1"/><rect x="3" y="4" width="1" height="1"/><rect x="1" y="5" width="1" height="1"/><rect x="3" y="5" width="1" height="1"/><rect x="1" y="6" width="1" height="1"/><rect x="3" y="6" width="1" height="1"/></g><g fill="#000" shape-rendering="crispEdges"><rect x="5" y="1" width="1" height="1"/><rect x="6" y="1" width="1" height="1"/><rect x="7" y="1" width="1" height="1"/><rect x="6" y="2" width="1" height="1"/><rect x="6" y="3" width="1" height="1"/><rect x="6" y="4" width="1" height="1"/><rect x="6" y="5" width="1" height="1"/><rect x="6" y="6" width="1" height="1"/></g><g fill="#000" shape-rendering="crispEdges"><rect x="9" y="1" width="1" height="1"/><rect x="13" y="1" width="1" height="1"/><rect x="9" y="2" width="1" height="1"/><rect x="10" y="2" width="1" height="1"/><rect x="12" y="2" width="1" height="1"/><rect x="13" y="2" width="1" height="1"/><rect x="9" y="3" width="1" height="1"/><rect x="11" y="3" width="1" height="1"/><rect x="13" y="3" width="1" height="1"/><rect x="9" y="4" width="1" height="1"/><rect x="13" y="4" width="1" height="1"/><rect x="9" y="5" width="1" height="1"/><rect x="13" y="5" width="1" height="1"/><rect x="9" y="6" width="1" height="1"/><rect x="13" y="6" width="1" height="1"/></g><g fill="#000" shape-rendering="crispEdges"><rect x="15" y="1" width="1" height="1"/><rect x="15" y="2" width="1" height="1"/><rect x="15" y="3" width="1" height="1"/><rect x="15" y="4" width="1" height="1"/><rect x="15" y="5" width="1" height="1"/><rect x="15" y="6" width="1" height="1"/><rect x="16" y="6" width="1" height="1"/><rect x="17" y="6" width="1" height="1"/></g><path d="M2.5 8V13.5H5M4 11.5L6 13.5L4 15.5" stroke="#1a2ab0" stroke-width="1.2" fill="none"/><g fill="#c01010" shape-rendering="crispEdges"><rect x="6" y="10" width="1" height="1"/><rect x="7" y="10" width="1" height="1"/><rect x="8" y="10" width="1" height="1"/><rect x="7" y="11" width="1" height="1"/><rect x="7" y="12" width="1" height="1"/><rect x="7" y="13" width="1" height="1"/><rect x="7" y="14" width="1" height="1"/><rect x="7" y="15" width="1" height="1"/></g><g fill="#c01010" shape-rendering="crispEdges"><rect x="10" y="10" width="1" height="1"/><rect x="12" y="10" width="1" height="1"/><rect x="10" y="11" width="1" height="1"/><rect x="12" y="11" width="1" height="1"/><rect x="11" y="12" width="1" height="1"/><rect x="11" y="13" width="1" height="1"/><rect x="10" y="14" width="1" height="1"/><rect x="12" y="14" width="1" height="1"/><rect x="10" y="15" width="1" height="1"/><rect x="12" y="15" width="1" height="1"/></g><g fill="#c01010" shape-rendering="crispEdges"><rect x="14" y="10" width="1" height="1"/><rect x="15" y="10" width="1" height="1"/><rect x="16" y="10" width="1" height="1"/><rect x="15" y="11" width="1" height="1"/><rect x="15" y="12" width="1" height="1"/><rect x="15" y="13" width="1" height="1"/><rect x="15" y="14" width="1" height="1"/><rect x="15" y="15" width="1" height="1"/></g></svg>
<svg class="a" style="left:136px;top:88px" width="18" height="8" viewBox="0 0 18 8" ><path d="M5 0.5L1 3.5L5 6.5V4.5L3.5 3.5L5 2.5Z" fill="#8a8a8a"/><g fill="#000" shape-rendering="crispEdges"><rect x="5" y="0" width="1" height="1"/><rect x="6" y="0" width="1" height="1"/><rect x="7" y="0" width="1" height="1"/><rect x="8" y="0" width="1" height="1"/><rect x="6" y="1" width="1" height="1"/><rect x="7" y="1" width="1" height="1"/><rect x="6" y="2" width="1" height="1"/><rect x="7" y="2" width="1" height="1"/><rect x="6" y="3" width="1" height="1"/><rect x="7" y="3" width="1" height="1"/><rect x="6" y="4" width="1" height="1"/><rect x="7" y="4" width="1" height="1"/><rect x="6" y="5" width="1" height="1"/><rect x="7" y="5" width="1" height="1"/><rect x="6" y="6" width="1" height="1"/><rect x="7" y="6" width="1" height="1"/></g><g fill="#000" shape-rendering="crispEdges"><rect x="11" y="0" width="1" height="1"/><rect x="12" y="0" width="1" height="1"/><rect x="10" y="1" width="1" height="1"/><rect x="13" y="1" width="1" height="1"/><rect x="10" y="2" width="1" height="1"/><rect x="13" y="2" width="1" height="1"/><rect x="10" y="3" width="1" height="1"/><rect x="13" y="3" width="1" height="1"/><rect x="10" y="4" width="1" height="1"/><rect x="11" y="4" width="1" height="1"/><rect x="12" y="4" width="1" height="1"/><rect x="13" y="4" width="1" height="1"/><rect x="10" y="5" width="1" height="1"/><rect x="13" y="5" width="1" height="1"/><rect x="10" y="6" width="1" height="1"/><rect x="13" y="6" width="1" height="1"/></g><g fill="#000" shape-rendering="crispEdges"><rect x="16" y="0" width="1" height="1"/><rect x="17" y="0" width="1" height="1"/><rect x="18" y="0" width="1" height="1"/><rect x="15" y="1" width="1" height="1"/><rect x="15" y="2" width="1" height="1"/><rect x="15" y="3" width="1" height="1"/><rect x="17" y="3" width="1" height="1"/><rect x="18" y="3" width="1" height="1"/><rect x="15" y="4" width="1" height="1"/><rect x="18" y="4" width="1" height="1"/><rect x="15" y="5" width="1" height="1"/><rect x="18" y="5" width="1" height="1"/><rect x="16" y="6" width="1" height="1"/><rect x="17" y="6" width="1" height="1"/><rect x="18" y="6" width="1" height="1"/></g></svg>
<svg class="a" style="left:160px;top:88px" width="18" height="10" viewBox="0 0 18 10" ><path d="M5 0.5L1 3.5L5 6.5V4.5L3.5 3.5L5 2.5Z" fill="#8a8a8a"/><g fill="#000" shape-rendering="crispEdges"><rect x="6" y="0" width="1" height="1"/><rect x="5" y="1" width="1" height="1"/><rect x="6" y="1" width="1" height="1"/><rect x="7" y="1" width="1" height="1"/><rect x="8" y="1" width="1" height="1"/><rect x="6" y="2" width="1" height="1"/><rect x="6" y="3" width="1" height="1"/><rect x="6" y="4" width="1" height="1"/><rect x="6" y="5" width="1" height="1"/><rect x="7" y="6" width="1" height="1"/><rect x="8" y="6" width="1" height="1"/></g><g fill="#000" shape-rendering="crispEdges"><rect x="10" y="2" width="1" height="1"/><rect x="11" y="2" width="1" height="1"/><rect x="12" y="2" width="1" height="1"/><rect x="13" y="3" width="1" height="1"/><rect x="10" y="4" width="1" height="1"/><rect x="11" y="4" width="1" height="1"/><rect x="12" y="4" width="1" height="1"/><rect x="13" y="4" width="1" height="1"/><rect x="9" y="5" width="1" height="1"/><rect x="13" y="5" width="1" height="1"/><rect x="10" y="6" width="1" height="1"/><rect x="11" y="6" width="1" height="1"/><rect x="12" y="6" width="1" height="1"/><rect x="13" y="6" width="1" height="1"/></g><g fill="#000" shape-rendering="crispEdges"><rect x="15" y="2" width="1" height="1"/><rect x="16" y="2" width="1" height="1"/><rect x="17" y="2" width="1" height="1"/><rect x="18" y="2" width="1" height="1"/><rect x="14" y="3" width="1" height="1"/><rect x="18" y="3" width="1" height="1"/><rect x="14" y="4" width="1" height="1"/><rect x="18" y="4" width="1" height="1"/><rect x="15" y="5" width="1" height="1"/><rect x="16" y="5" width="1" height="1"/><rect x="17" y="5" width="1" height="1"/><rect x="18" y="5" width="1" height="1"/><rect x="18" y="6" width="1" height="1"/><rect x="14" y="7" width="1" height="1"/><rect x="15" y="7" width="1" height="1"/><rect x="16" y="7" width="1" height="1"/><rect x="17" y="7" width="1" height="1"/></g></svg>
<svg class="a" style="left:182px;top:83px" width="17" height="17" viewBox="0 0 17 17" ><defs><radialGradient id="gl" cx=".45" cy=".35" r=".75"><stop offset="0" stop-color="#b8ecff"/><stop offset=".45" stop-color="#3aa0f0"/><stop offset="1" stop-color="#0848b8"/></radialGradient></defs><circle cx="8.5" cy="8" r="7.6" fill="url(#gl)" stroke="#203a70" stroke-width=".7"/><path d="M3 3.5Q6 1 9.5 1.5Q8 3 9 4.5Q7 6.5 4.5 6Q3.5 5 2.2 5.5Z" fill="#8ee070"/><path d="M11 2.5Q14 3.5 15.5 7Q15 10 13 12Q12 10 13 9Q11 8 11.5 6Q10 5 11 2.5Z" fill="#50b840"/><path d="M6 9Q8.5 9.5 8.5 11.5Q7.5 13 7 15Q5.5 13 6.5 12Q5 11 6 9Z" fill="#50b840"/></svg>
<svg class="a" style="left:206px;top:83px" width="16" height="17" viewBox="0 0 16 17" ><path d="M1 5.5L4.5 5L6 7V11Z" fill="#1e5ed0"/><path d="M1 5.8L6 11L9 13.5" stroke="#1a3a80" stroke-width=".8" fill="none"/><rect x="9" y="6" width="1.4" height="8.5" fill="#000"/><rect x="10.4" y="6.5" width="3" height="8" fill="#1e5ed0"/><rect x="13.4" y="8" width="1" height="3.5" fill="#1e5ed0"/><rect x="10.4" y="12.5" width="3" height="2" fill="#0c3a90"/><path d="M6.5 2.8L11.5 1.5L14.5 1L14.3 4.5L13.5 6.5L11 5.2L7 4.5Z" fill="#f8f000" stroke="#b07010" stroke-width=".8"/><path d="M4 3.3H7" stroke="#000" stroke-width="1.1"/></svg>
<svg class="a" style="left:228px;top:83px" width="16" height="16" viewBox="0 0 16 16" ><path d="M12.8 3.5Q11.5 1.8 8 1.8Q2.3 1.8 2.3 8Q2.3 14 8 14Q10.8 14 12.8 13.2V9.8H8.5" stroke="#1d52b8" stroke-width="2.4" fill="none"/><rect x="11.5" y="2" width="2" height="2" fill="#0a2a70"/></svg>
<svg class="a" style="left:265px;top:83px" width="17" height="15" viewBox="0 0 17 15" shape-rendering="crispEdges"><rect x="0" y="0" width="16" height="15" fill="#a2a2a2"/></svg>
<svg class="a" style="left:289px;top:84px" width="13" height="15" viewBox="0 0 13 15" ><path d="M0 0H9L12 3V8H13V15H0Z" fill="#a2a2a2"/><rect x="1" y="1" width="2" height="1" fill="#e8e8e8"/><rect x="4" y="1" width="3" height="1" fill="#e8e8e8"/></svg>
<svg class="a" style="left:314px;top:85px" width="14" height="14" viewBox="0 0 14 14" ><rect x="0.8" y="0.8" width="11.6" height="9.6" fill="#e6f2fc" stroke="#1e58b8" stroke-width="1.6"/><path d="M3 4.5H8M3 6.5H9.5" stroke="#1e3a90" stroke-width="1"/><rect x="4.5" y="11" width="4" height="1.5" fill="#1e58b8"/><rect x="1" y="12" width="11" height="1.3" fill="#1e58b8"/></svg>
<svg class="a" style="left:350px;top:85px" width="11" height="11" viewBox="0 0 11 11" ><rect x="0.75" y="0.75" width="9.5" height="9.5" rx="1.2" fill="#f6f6ee" stroke="#000" stroke-width="1.5"/><circle cx="5.5" cy="5.3" r="3.2" fill="#e53a2a" stroke="#3a1a1a" stroke-width=".8"/><circle cx="5" cy="4.6" r="1.2" fill="#ff8a70"/></svg>
<svg class="a" style="left:369px;top:84px" width="17" height="9" viewBox="0 0 17 9" ><path d="M1 4.2H12.5M1.8 4.5L4.3 1.2L6 3.2M11.8 4.5L14.6 1.2L16 3.6" stroke="#000" stroke-width="1.2" fill="none"/><rect x="1.6" y="4.2" width="4.2" height="3.4" rx="1" fill="#b4d0fa" stroke="#000" stroke-width="1.2"/><rect x="7.8" y="4.2" width="4.2" height="3.4" rx="1" fill="#b4d0fa" stroke="#000" stroke-width="1.2"/></svg>

<!-- tabs -->
<div class="a" style="left:8px;top:104px;width:1127px;height:23px;background:#f0f0f0"></div>
<div class="a" style="left:139px;top:125px;width:995px;height:1px;background:#a0a0a0"></div>
<div class="a" style="left:8px;top:104px;width:131px;height:23px;border:1px solid #3c7fb1;border-bottom:none;background:linear-gradient(#eaf6fd 0,#d9f0fc 40%,#bee6fd 45%,#a7d9f5 100%)"><div class="a" style="left:0;top:0;width:129px;height:22px;border:1px solid rgba(255,255,255,.7);border-bottom:none"></div></div>
<div class="a" style="left:26px;top:109px;white-space:nowrap;font-size:11px;line-height:13px;letter-spacing:0.1px">1.. remote-config.xml</div>
<div class="a" style="left:8px;top:127px;width:1127px;height:1px;background:#a0a0a0"></div>
<div class="a" style="left:8px;top:128px;width:1127px;height:1px;background:#fff"></div>

<!-- ruler -->
<div class="a" style="left:8px;top:129px;width:1127px;height:17px;background:#f0f0f0"></div>
<div class="tk" style="left:44px;top:141px;height:5px"></div>
<div class="rl" style="left:24px">0</div>
<div class="tk" style="left:52px;top:144px;height:2px"></div>
<div class="tk" style="left:60px;top:144px;height:2px"></div>
<div class="tk" style="left:68px;top:144px;height:2px"></div>
<div class="tk" style="left:76px;top:144px;height:2px"></div>
<div class="tk" style="left:84px;top:141px;height:5px"></div>
<div class="tk" style="left:92px;top:144px;height:2px"></div>
<div class="tk" style="left:100px;top:144px;height:2px"></div>
<div class="tk" style="left:108px;top:144px;height:2px"></div>
<div class="tk" style="left:116px;top:144px;height:2px"></div>
<div class="tk" style="left:124px;top:141px;height:5px"></div>
<div class="rl" style="left:104px">10</div>
<div class="tk" style="left:132px;top:144px;height:2px"></div>
<div class="tk" style="left:140px;top:144px;height:2px"></div>
<div class="tk" style="left:148px;top:144px;height:2px"></div>
<div class="tk" style="left:156px;top:144px;height:2px"></div>
<div class="tk" style="left:164px;top:141px;height:5px"></div>
<div class="tk" style="left:172px;top:144px;height:2px"></div>
<div class="tk" style="left:180px;top:144px;height:2px"></div>
<div class="tk" style="left:188px;top:144px;height:2px"></div>
<div class="tk" style="left:196px;top:144px;height:2px"></div>
<div class="tk" style="left:204px;top:141px;height:5px"></div>
<div class="rl" style="left:184px">20</div>
<div class="tk" style="left:212px;top:144px;height:2px"></div>
<div class="tk" style="left:220px;top:144px;height:2px"></div>
<div class="tk" style="left:228px;top:144px;height:2px"></div>
<div class="tk" style="left:236px;top:144px;height:2px"></div>
<div class="tk" style="left:244px;top:141px;height:5px"></div>
<div class="tk" style="left:252px;top:144px;height:2px"></div>
<div class="tk" style="left:260px;top:144px;height:2px"></div>
<div class="tk" style="left:268px;top:144px;height:2px"></div>
<div class="tk" style="left:276px;top:144px;height:2px"></div>
<div class="tk" style="left:284px;top:141px;height:5px"></div>
<div class="rl" style="left:264px">30</div>
<div class="tk" style="left:292px;top:144px;height:2px"></div>
<div class="tk" style="left:300px;top:144px;height:2px"></div>
<div class="tk" style="left:308px;top:144px;height:2px"></div>
<div class="tk" style="left:316px;top:144px;height:2px"></div>
<div class="tk" style="left:324px;top:141px;height:5px"></div>
<div class="tk" style="left:332px;top:144px;height:2px"></div>
<div class="tk" style="left:340px;top:144px;height:2px"></div>
<div class="tk" style="left:348px;top:144px;height:2px"></div>
<div class="tk" style="left:356px;top:144px;height:2px"></div>
<div class="tk" style="left:364px;top:141px;height:5px"></div>
<div class="rl" style="left:344px">40</div>
<div class="tk" style="left:372px;top:144px;height:2px"></div>
<div class="tk" style="left:380px;top:144px;height:2px"></div>
<div class="tk" style="left:388px;top:144px;height:2px"></div>
<div class="tk" style="left:396px;top:144px;height:2px"></div>
<div class="tk" style="left:404px;top:141px;height:5px"></div>
<div class="tk" style="left:412px;top:144px;height:2px"></div>
<div class="tk" style="left:420px;top:144px;height:2px"></div>
<div class="tk" style="left:428px;top:144px;height:2px"></div>
<div class="tk" style="left:436px;top:144px;height:2px"></div>
<div class="tk" style="left:444px;top:141px;height:5px"></div>
<div class="rl" style="left:424px">50</div>
<div class="tk" style="left:452px;top:144px;height:2px"></div>
<div class="tk" style="left:460px;top:144px;height:2px"></div>
<div class="tk" style="left:468px;top:144px;height:2px"></div>
<div class="tk" style="left:476px;top:144px;height:2px"></div>
<div class="tk" style="left:484px;top:141px;height:5px"></div>
<div class="tk" style="left:492px;top:144px;height:2px"></div>
<div class="tk" style="left:500px;top:144px;height:2px"></div>
<div class="tk" style="left:508px;top:144px;height:2px"></div>
<div class="tk" style="left:516px;top:144px;height:2px"></div>
<div class="tk" style="left:524px;top:141px;height:5px"></div>
<div class="rl" style="left:504px">60</div>
<div class="tk" style="left:532px;top:144px;height:2px"></div>
<div class="tk" style="left:540px;top:144px;height:2px"></div>
<div class="tk" style="left:548px;top:144px;height:2px"></div>
<div class="tk" style="left:556px;top:144px;height:2px"></div>
<div class="tk" style="left:564px;top:141px;height:5px"></div>
<div class="tk" style="left:572px;top:144px;height:2px"></div>
<div class="tk" style="left:580px;top:144px;height:2px"></div>
<div class="tk" style="left:588px;top:144px;height:2px"></div>
<div class="tk" style="left:596px;top:144px;height:2px"></div>
<div class="tk" style="left:604px;top:141px;height:5px"></div>
<div class="rl" style="left:584px">70</div>
<div class="tk" style="left:612px;top:144px;height:2px"></div>
<div class="tk" style="left:620px;top:144px;height:2px"></div>
<div class="tk" style="left:628px;top:144px;height:2px"></div>
<div class="tk" style="left:636px;top:144px;height:2px"></div>
<div class="tk" style="left:644px;top:141px;height:5px"></div>
<div class="tk" style="left:652px;top:144px;height:2px"></div>
<div class="tk" style="left:660px;top:144px;height:2px"></div>
<div class="tk" style="left:668px;top:144px;height:2px"></div>
<div class="tk" style="left:676px;top:144px;height:2px"></div>
<div class="tk" style="left:684px;top:141px;height:5px"></div>
<div class="rl" style="left:664px">80</div>
<div class="tk" style="left:692px;top:144px;height:2px"></div>
<div class="tk" style="left:700px;top:144px;height:2px"></div>
<div class="tk" style="left:708px;top:144px;height:2px"></div>
<div class="tk" style="left:716px;top:144px;height:2px"></div>
<div class="tk" style="left:724px;top:141px;height:5px"></div>
<div class="tk" style="left:732px;top:144px;height:2px"></div>
<div class="tk" style="left:740px;top:144px;height:2px"></div>
<div class="tk" style="left:748px;top:144px;height:2px"></div>
<div class="tk" style="left:756px;top:144px;height:2px"></div>
<div class="tk" style="left:764px;top:141px;height:5px"></div>
<div class="rl" style="left:744px">90</div>
<div class="tk" style="left:772px;top:144px;height:2px"></div>
<div class="tk" style="left:780px;top:144px;height:2px"></div>
<div class="tk" style="left:788px;top:144px;height:2px"></div>
<div class="tk" style="left:796px;top:144px;height:2px"></div>
<div class="tk" style="left:804px;top:141px;height:5px"></div>
<div class="tk" style="left:812px;top:144px;height:2px"></div>
<div class="tk" style="left:820px;top:144px;height:2px"></div>
<div class="tk" style="left:828px;top:144px;height:2px"></div>
<div class="tk" style="left:836px;top:144px;height:2px"></div>
<div class="tk" style="left:844px;top:141px;height:5px"></div>
<div class="rl" style="left:824px">100</div>
<div class="tk" style="left:852px;top:144px;height:2px"></div>
<div class="tk" style="left:860px;top:144px;height:2px"></div>
<div class="tk" style="left:868px;top:144px;height:2px"></div>
<div class="tk" style="left:876px;top:144px;height:2px"></div>
<div class="tk" style="left:884px;top:141px;height:5px"></div>
<div class="tk" style="left:892px;top:144px;height:2px"></div>
<div class="tk" style="left:900px;top:144px;height:2px"></div>
<div class="tk" style="left:908px;top:144px;height:2px"></div>
<div class="tk" style="left:916px;top:144px;height:2px"></div>
<div class="tk" style="left:924px;top:141px;height:5px"></div>
<div class="rl" style="left:904px">110</div>
<div class="tk" style="left:932px;top:144px;height:2px"></div>
<div class="tk" style="left:940px;top:144px;height:2px"></div>
<div class="tk" style="left:948px;top:144px;height:2px"></div>
<div class="tk" style="left:956px;top:144px;height:2px"></div>
<div class="tk" style="left:964px;top:141px;height:5px"></div>
<div class="tk" style="left:972px;top:144px;height:2px"></div>
<div class="tk" style="left:980px;top:144px;height:2px"></div>
<div class="tk" style="left:988px;top:144px;height:2px"></div>
<div class="tk" style="left:996px;top:144px;height:2px"></div>
<div class="tk" style="left:1004px;top:141px;height:5px"></div>
<div class="rl" style="left:984px">120</div>
<div class="tk" style="left:1012px;top:144px;height:2px"></div>
<div class="tk" style="left:1020px;top:144px;height:2px"></div>
<div class="tk" style="left:1028px;top:144px;height:2px"></div>
<div class="tk" style="left:1036px;top:144px;height:2px"></div>
<div class="tk" style="left:1044px;top:141px;height:5px"></div>
<div class="tk" style="left:1052px;top:144px;height:2px"></div>
<div class="tk" style="left:1060px;top:144px;height:2px"></div>
<div class="tk" style="left:1068px;top:144px;height:2px"></div>
<div class="tk" style="left:1076px;top:144px;height:2px"></div>
<div class="tk" style="left:1084px;top:141px;height:5px"></div>
<div class="rl" style="left:1064px">130</div>
<div class="tk" style="left:1092px;top:144px;height:2px"></div>
<div class="tk" style="left:1100px;top:144px;height:2px"></div>
<div class="tk" style="left:1108px;top:144px;height:2px"></div>
<div class="tk" style="left:1116px;top:144px;height:2px"></div>
<div class="a" style="left:8px;top:146px;width:1127px;height:1px;background:#a0a0a0"></div>

<!-- editor -->
<div class="a" style="left:8px;top:147px;width:1127px;height:720px;background:#fff;border-left:1px solid #a0a0a0;border-right:1px solid #fff"></div>
<div class="a" style="left:10px;top:148px;width:32px;height:701px;background:#f0f0f0"></div>
<div class="a" style="left:684px;top:148px;width:1px;height:701px;background:#c0c0c0"></div>
<div class="a" style="left:10px;top:149px;width:32px;height:700px"><div class="num" style="top:0px">209</div><div class="num" style="top:17px">210</div><div class="num" style="top:34px">211</div><div class="num" style="top:51px">212</div><div class="num" style="top:68px">213</div><div class="num" style="top:85px">214</div><div class="num" style="top:102px">215</div><div class="num" style="top:119px">216</div><div class="num" style="top:136px">217</div><div class="num" style="top:153px">218</div><div class="num" style="top:170px">219</div><div class="num" style="top:187px">220</div><div class="num" style="top:204px">221</div><div class="num" style="top:221px">222</div><div class="num" style="top:238px">223</div><div class="num" style="top:255px">224</div><div class="num" style="top:272px">225</div><div class="num" style="top:289px">226</div><div class="num" style="top:306px">227</div><div class="num" style="top:323px">228</div><div class="num" style="top:340px">229</div><div class="num" style="top:357px">230</div><div class="num" style="top:374px">231</div><div class="num" style="top:391px">232</div><div class="num" style="top:408px">233</div><div class="num" style="top:425px">234</div><div class="num" style="top:442px">235</div><div class="num" style="top:459px">236</div><div class="num" style="top:476px">237</div><div class="num" style="top:493px">238</div><div class="num" style="top:510px">239</div><div class="num" style="top:527px">240</div><div class="num" style="top:544px">241</div><div class="num" style="top:561px">242</div><div class="num" style="top:578px">243</div><div class="num" style="top:595px">244</div><div class="num" style="top:612px">245</div><div class="num" style="top:629px">246</div><div class="num" style="top:646px">247</div><div class="num" style="top:663px">248</div><div class="num" style="top:680px">249</div></div>
<div class="a" style="left:44px;top:149px;width:1073px;height:699px;overflow:hidden"><div class="ln" style="top:0px"></div>
<div class="ln" style="top:17px">          <span class="c">2. Headless only applies when using a collection of individual sources</span></div>
<div class="ln" style="top:34px">          <span class="c">(ie etl–export.xml) and not a complete replacement, as directed by</span></div>
<div class="ln" style="top:51px">          <span class="c">full–stack tag. It is used to indicate if the user should be presented</span></div>
<div class="ln" style="top:68px">          <span class="c">with options to accept all or some of the provided configurations.</span></div>
<div class="ln" style="top:85px">          <span class="c">It is recommended to stay headless in order to ensure that the user has</span></div>
<div class="ln" style="top:102px">          <span class="c">the full update being provided.</span></div>
<div class="ln" style="top:119px"></div>
<div class="ln" style="top:136px">          <span class="c">default=true, when tag not present or set to something other than 'false'</span></div>
<div class="ln" style="top:153px"></div>
<div class="ln" style="top:170px">          <span class="c">3. Remove–guid only applies when using a collection of individual sources</span></div>
<div class="ln" style="top:187px">          <span class="c">(i.e. etl–export.xml) and not a complete replacement, as directed by</span></div>
<div class="ln" style="top:204px">          <span class="c">full–stack tag. It is used to supply individual source config guids to</span></div>
<div class="ln" style="top:221px">          <span class="c">remove (e.g. no longer supported), adding one guid per tag.</span></div>
<div class="ln" style="top:238px">          <span class="c">NOTE: Removal of guids is accomplished even if no uri(s) are supplied.</span></div>
<div class="ln" style="top:255px"></div>
<div class="ln" style="top:272px">          <span class="c">(0+)&lt;remove–guid&gt;[guid]&lt;/remove–guid&gt;</span></div>
<div class="ln" style="top:289px">          <span class="c">Example: &lt;remove–guid&gt;1234567890&lt;/remove–guid&gt;</span></div>
<div class="ln" style="top:306px"></div>
<div class="ln" style="top:323px">          <span class="c">Full–Stack clarifies that this is a complete replacement and not a collection</span></div>
<div class="ln" style="top:340px">          <span class="c">of individual sources (ie etl–export.xml).</span></div>
<div class="ln" style="top:357px"></div>
<div class="ln" style="top:374px">          <span class="c">default=false, when tag not present or set to something other than 'true'</span></div>
<div class="ln" style="top:391px">      <span class="t">––&gt;</span></div>
<div class="ln" style="top:408px">      <span class="t">&lt;source–manager&gt;</span></div>
<div class="ln" style="top:425px">        <span class="t">&lt;uri&gt;</span><span class="x">source–manager/sources.etl–export.xml</span><span class="t">&lt;/uri&gt;</span></div>
<div class="ln" style="top:442px">        <span class="t">&lt;headless&gt;</span><span class="x">true</span><span class="t">&lt;/headless&gt;</span></div>
<div class="ln" style="top:459px">        <span class="t">&lt;remove–guid&gt;</span><span class="x">838484b7–fe9f–4d5b–af28–e46e92cdceeb</span><span class="t">&lt;/remove–guid&gt; &lt;!––</span><span class="c"> removes Name &amp; DOB Federated Search Plugin </span><span class="t">––&gt;</span></div>
<div class="ln" style="top:476px">        <span class="t">&lt;remove–guid&gt;</span><span class="x">caf7–_96413873821_e5e790f3_8599208203f62ffe</span><span class="t">&lt;/remove–guid&gt; &lt;!––</span><span class="c"> removes CNN Plugin </span><span class="t">––&gt;</span></div>
<div class="ln" style="top:493px">        <span class="t">&lt;remove–guid&gt;</span><span class="x">7bf7–_96413873821_e5e790f3_8599208203f62ffe</span><span class="t">&lt;/remove–guid&gt; &lt;!––</span><span class="c"> removes Engadget Plugin </span><span class="t">––&gt;</span></div>
<div class="ln" style="top:510px">        <span class="t">&lt;remove–guid&gt;</span><span class="x">2cf7–_96413873821_e5e790f3_8599208203f62ffe</span><span class="t">&lt;/remove–guid&gt; &lt;!––</span><span class="c"> removes ESPN Plugin </span><span class="t">––&gt;</span></div>
<div class="ln" style="top:527px">        <span class="t">&lt;remove–guid&gt;</span><span class="x">4df7–_96413873821_e5e790f3_8599208203f62ffe</span><span class="t">&lt;/remove–guid&gt; &lt;!––</span><span class="c"> removes NOAA Plugin </span><span class="t">––&gt;</span></div>
<div class="ln" style="top:544px">        <span class="t">&lt;full–stack&gt;</span><span class="x">false</span><span class="t">&lt;/full–stack&gt;</span></div>
<div class="ln" style="top:561px">      <span class="t">&lt;/source–manager&gt;</span></div>
<div class="ln" style="top:578px"></div>
<div class="ln" style="top:595px"></div>
<div class="ln" style="top:612px">      <span class="t">&lt;!––</span><span class="c"> For maintenance, list of source manager plugin configs to remove (by name only) if found in Semantica/autosave folder</span></div>
<div class="ln" style="top:629px">           <span class="c">(to include its children). For safety &amp; consistency, this should be run before "plugin–configs" tag is run.</span></div>
<div class="ln" style="top:646px">      <span class="t">––&gt;</span></div>
<div class="ln" style="top:663px">      <span class="t">&lt;!––</span><span class="c">remove–plugin–config&gt;test1.xml&lt;/remove–plugin–config</span><span class="t">––&gt;</span></div>
<div class="ln" style="top:680px"></div></div>

<!-- v scrollbar -->
<div class="a" style="left:1117px;top:148px;width:17px;height:701px;background:linear-gradient(90deg,#e8e8e8,#f0f0f0 30%,#f0f0f0 70%,#e8e8e8)"></div>
<svg class="a" style="left:1122px;top:155px" width="8" height="5" viewBox="0 0 8 5"><defs><linearGradient id="ar1" x1="0" y1="0" x2="1" y2="0"><stop offset="0" stop-color="#222"/><stop offset="1" stop-color="#888"/></linearGradient></defs><path d="M0 4.5L3.5 0.5L7 4.5Z" fill="url(#ar1)"/></svg>
<svg class="a" style="left:1122px;top:839px" width="8" height="5" viewBox="0 0 8 5"><path d="M0 0.5L3.5 4.5L7 0.5Z" fill="url(#ar1)"/></svg>
<div class="a" style="left:1117px;top:528px;width:15px;height:69px;border:1px solid #979797;border-radius:2px;background:linear-gradient(90deg,#f4f4f4,#e6e6e6 50%,#d6d6d6 51%,#cfcfcf)"></div>
<div class="a" style="left:1121px;top:558px;width:7px;height:1px;background:#3c3c3c;box-shadow:0 3px 0 #3c3c3c,0 6px 0 #3c3c3c,0 1px 0 #fff,0 4px 0 #fff,0 7px 0 #fff"></div>

<!-- h scrollbar -->
<div class="a" style="left:9px;top:849px;width:1106px;height:17px;background:linear-gradient(#e8e8e8,#f0f0f0 30%,#f0f0f0 70%,#e8e8e8)"></div>
<div class="a" style="left:1115px;top:849px;width:19px;height:17px;background:#f0f0f0"></div>
<svg class="a" style="left:15px;top:854px" width="6" height="8" viewBox="0 0 6 8"><defs><linearGradient id="ar2" x1="0" y1="0" x2="0" y2="1"><stop offset="0" stop-color="#222"/><stop offset="1" stop-color="#888"/></linearGradient></defs><path d="M4.5 0L0.5 3.5L4.5 7Z" fill="url(#ar2)"/></svg>
<svg class="a" style="left:1106px;top:854px" width="6" height="8" viewBox="0 0 6 8"><path d="M0.5 0L4.5 3.5L0.5 7Z" fill="url(#ar2)"/></svg>
<div class="a" style="left:28px;top:850px;width:138px;height:15px;border:1px solid #979797;border-radius:2px;background:linear-gradient(#f4f4f4,#e6e6e6 50%,#d6d6d6 51%,#cfcfcf)"></div>
<div class="a" style="left:93px;top:855px;width:1px;height:6px;background:#3c3c3c;box-shadow:3px 0 0 #3c3c3c,6px 0 0 #3c3c3c,1px 0 0 #fff,4px 0 0 #fff,7px 0 0 #fff"></div>

<!-- status -->
<div class="a" style="left:8px;top:866px;width:1126px;height:1px;background:#fff"></div>
<div class="a" style="left:8px;top:867px;width:1127px;height:1px;background:#a4a4a4"></div>
<div class="a" style="left:8px;top:868px;width:1127px;height:1px;background:#8e8e8e"></div>
<div class="a" style="left:8px;top:869px;width:1127px;height:18px;background:#f0eded;border-top:1px solid #fff;border-left:1px solid #fff;border-bottom:1px solid #fff;border-right:1px solid #c8c8c8"></div>
<div class="ssep" style="left:167px"></div>
<div class="ssep" style="left:217px"></div>
<div class="ssep" style="left:236px"></div>
<div class="ssep" style="left:255px"></div>
<div class="ssep" style="left:274px"></div>
<div class="ssep" style="left:293px"></div>
<div class="ssep" style="left:393px"></div>
<div class="ssep" style="left:533px"></div>
<div class="ssep" style="left:592px"></div>
<svg class="a" style="left:240px;top:875px" width="13" height="8" viewBox="0 0 13 8"><path d="M0 0.5H12M0 2.5H12M0 4.5H12M0 6.5H9" stroke="#1a2aa0"/></svg>
<div class="st" style="left:31px;letter-spacing:-0.25px">201 : 59 / 343&nbsp; [19053]</div>
<div class="st" style="left:326px;letter-spacing:-0.35px">32&nbsp; $0020</div>
<div class="st" style="left:453px">XML</div>
<div class="st" style="left:553px">DOS</div>
<div class="st" style="left:598px;letter-spacing:-0.05px">Code page: ANSI (Windows)</div>
</body></html>
